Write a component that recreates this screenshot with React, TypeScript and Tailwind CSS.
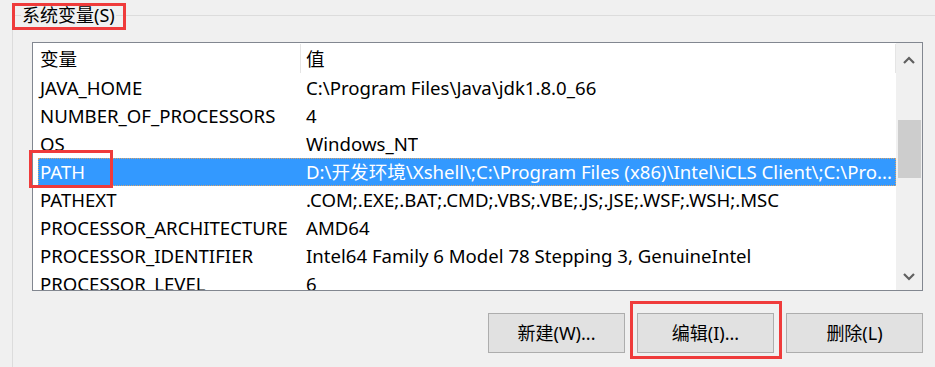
const rows: [string, string][] = [
  ['JAVA_HOME', 'C:\\Program Files\\Java\\jdk1.8.0_66'],
  ['NUMBER_OF_PROCESSORS', '4'],
  ['OS', 'Windows_NT'],
  ['PATH', 'D:\\开发环境\\Xshell\\;C:\\Program Files (x86)\\Intel\\iCLS Client\\;C:\\Pro...'],
  ['PATHEXT', '.COM;.EXE;.BAT;.CMD;.VBS;.VBE;.JS;.JSE;.WSF;.WSH;.MSC'],
  ['PROCESSOR_ARCHITECTURE', 'AMD64'],
  ['PROCESSOR_IDENTIFIER', 'Intel64 Family 6 Model 78 Stepping 3, GenuineIntel'],
  ['PROCESSOR_LEVEL', '6'],
];

const selected = 'PATH';

function Chevron({ up }: { up?: boolean }) {
  return (
    <svg width="12" height="8" viewBox="0 0 12 8">
      <polyline
        points={up ? '1,7 6,2 11,7' : '1,1 6,6 11,1'}
        fill="none"
        stroke="#606060"
        strokeWidth="2.2"
      />
    </svg>
  );
}

function Button({ label }: { label: string }) {
  return (
    <button className="h-[40px] w-[137px] border border-[#adadad] bg-[#e1e1e1] text-[18px] text-black">
      {label}
    </button>
  );
}

export default function App() {
  return (
    <div
      className="relative h-[367px] w-[935px] overflow-hidden bg-[#f0f0f0] text-black"
      style={{ fontFamily: '"Noto Sans", "Noto Sans CJK SC", sans-serif' }}
    >
      {/* 分组框：系统变量 */}
      <fieldset className="ml-[12px] border-l border-t border-[#dcdcdc] pb-[40px]">
        <legend className="ml-[8px] px-[1px] text-[18px] leading-[30px]">系统变量(S)</legend>

        {/* 列表框 */}
        <div className="ml-[19px] mt-[12px] flex h-[249px] w-[891px] border border-[#828790] bg-white">
          <div className="flex-1 overflow-hidden text-[18.6px]">
            {/* 表头 */}
            <div className="flex h-[31px] items-center">
              <div className="flex h-[29px] w-[268px] items-center border-r border-[#e5e5e5] pl-[7px]">变量</div>
              <div className="flex h-[29px] flex-1 items-center border-r border-[#e5e5e5] pl-[5px]">值</div>
            </div>
            {rows.map(([name, value]) => {
              const active = name === selected;
              return (
                <div
                  key={name}
                  className={
                    active
                      ? 'ml-[5px] flex h-[28px] items-center whitespace-nowrap bg-[#3399ff] text-white outline-1 -outline-offset-1 outline-dotted outline-[#d9a46a]'
                      : 'ml-[5px] flex h-[28px] items-center whitespace-nowrap'
                  }
                >
                  <div className="w-[266px] pl-[2px]">{name}</div>
                  <div className="overflow-hidden pl-[2px]">{value}</div>
                </div>
              );
            })}
          </div>

          {/* 滚动条 */}
          <div className="flex w-[26px] flex-col items-center bg-[#f0f0f0]">
            <div className="flex h-[34px] items-center justify-center">
              <Chevron up />
            </div>
            <div className="h-[43px]" />
            <div className="h-[58px] w-[23px] bg-[#cdcdcd]" />
            <div className="flex-1" />
            <div className="flex h-[26px] items-center justify-center">
              <Chevron />
            </div>
          </div>
        </div>

        {/* 按钮 */}
        <div className="mt-[22px] flex w-[910px] justify-end gap-[12px]">
          <Button label="新建(W)..." />
          <Button label="编辑(I)..." />
          <Button label="删除(L)" />
        </div>
      </fieldset>

      {/* 红色标注框 */}
      <div className="absolute left-[12px] top-[3px] h-[27px] w-[114px] border-[3px] border-[#ef3b3b]" />
      <div className="absolute left-[29px] top-[150px] h-[38px] w-[84px] border-[3px] border-[#ef3b3b]" />
      <div className="absolute left-[630px] top-[301px] h-[58px] w-[152px] border-[3px] border-[#ef3b3b]" />
    </div>
  );
}
